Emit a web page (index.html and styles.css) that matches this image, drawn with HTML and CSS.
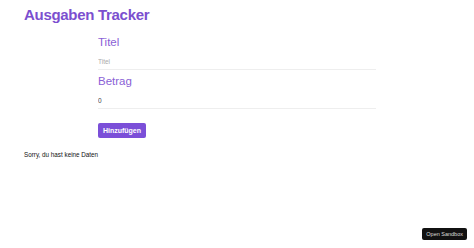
FILE: index.html
```html
<!DOCTYPE html>
<html lang="de">
<head>
<meta charset="utf-8">
<title>Ausgaben Tracker</title>
<link rel="stylesheet" href="styles.css">
</head>
<body>
<div class="app">
  <h1 class="title">Ausgaben Tracker</h1>
  <form class="form">
    <label class="label" for="titel">Titel</label>
    <input class="field" id="titel" type="text" placeholder="Titel">
    <label class="label" for="betrag">Betrag</label>
    <input class="field" id="betrag" type="number" value="0">
    <button class="btn" type="button">Hinzufügen</button>
  </form>
  <p class="empty">Sorry, du hast keine Daten</p>
</div>
<a class="sandbox">Open Sandbox</a>
</body>
</html>
```

FILE: styles.css
```css
html, body {
  margin: 0;
  padding: 0;
  background: #ffffff;
}
body {
  font-family: "Liberation Sans", Arial, sans-serif;
  width: 474px;
  height: 248px;
  overflow: hidden;
  position: relative;
}
.app {
  padding: 0 24px;
}
.title {
  margin: 0;
  padding-top: 5px;
  font-size: 15px;
  line-height: 20px;
  font-weight: bold;
  letter-spacing: -0.3px;
  color: #7b4fcf;
}
.form {
  width: 278px;
  margin: 11px auto 0;
  display: flex;
  flex-direction: column;
  align-items: flex-start;
}
.label {
  font-size: 11.5px;
  line-height: 13px;
  color: #8a5fd6;
}
.field {
  width: 100%;
  box-sizing: border-box;
  border: none;
  border-bottom: 1px solid #eeeeee;
  outline: none;
  padding: 0;
  margin: 5px 0 5px;
  height: 16px;
  font-family: "Liberation Sans", Arial, sans-serif;
  font-size: 6.5px;
  color: #444444;
  background: transparent;
  -moz-appearance: textfield;
}
.field::placeholder {
  color: #aaaaaa;
}
.field::-webkit-outer-spin-button,
.field::-webkit-inner-spin-button {
  -webkit-appearance: none;
  margin: 0;
}
.btn {
  margin-top: 9px;
  width: 48px;
  height: 15px;
  padding: 0;
  border: none;
  border-radius: 2px;
  background: #7b4fd8;
  color: #ffffff;
  font-family: "Liberation Sans", Arial, sans-serif;
  font-size: 7px;
  font-weight: bold;
}
.empty {
  margin: 12px 0 0;
  font-size: 6.3px;
  line-height: 9px;
  color: #111111;
}
.sandbox {
  position: absolute;
  right: 7px;
  bottom: 8px;
  background: #111111;
  color: #dddddd;
  font-size: 5.5px;
  line-height: 12px;
  padding: 0 4px;
  border-radius: 2px;
}
```
